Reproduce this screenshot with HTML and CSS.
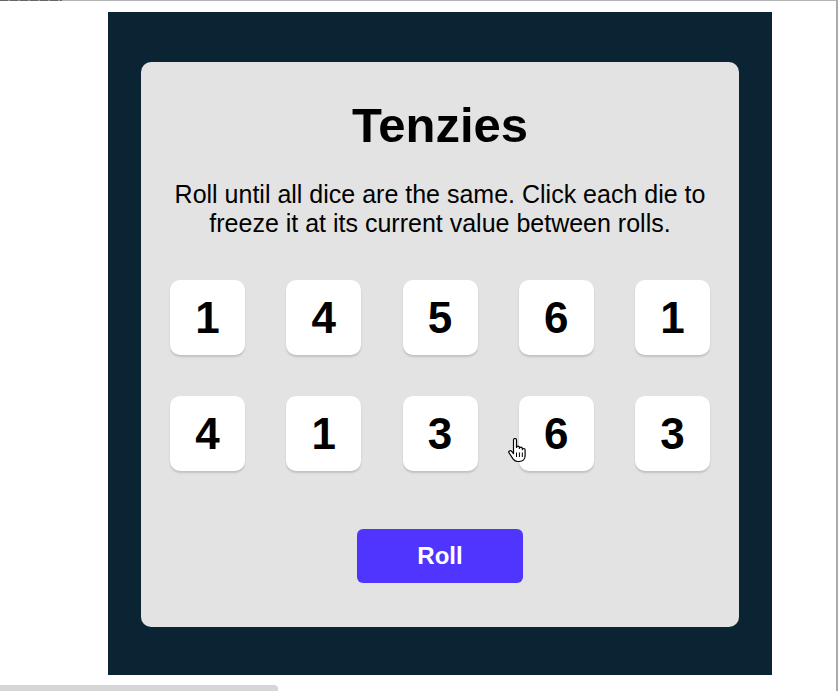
FILE: index.html
```html
<!DOCTYPE html>
<html lang="en">
<head>
  <meta charset="UTF-8" />
  <meta name="viewport" content="width=device-width, initial-scale=1.0" />
  <title>Tenzies</title>
  <link rel="stylesheet" href="styles.css">
</head>
<body>
  <div class="frame">
    <div class="frame-dash"></div>
    <main class="board">
      <div class="card">
        <h1 class="title">Tenzies</h1>
        <p class="instructions">Roll until all dice are the same. Click each die to freeze it at its current value between rolls.</p>
        <div class="dice">
          <button class="die">1</button>
          <button class="die">4</button>
          <button class="die">5</button>
          <button class="die">6</button>
          <button class="die">1</button>
          <button class="die">4</button>
          <button class="die">1</button>
          <button class="die">3</button>
          <button class="die">6</button>
          <button class="die">3</button>
        </div>
        <button class="roll">Roll</button>
      </div>
    </main>
    <svg class="cursor" width="20" height="26" viewBox="0 0 20 26">
      <path d="M5.5 2.2c0-1 .7-1.7 1.5-1.7s1.5.7 1.5 1.7v7.3c.2-.9.8-1.4 1.5-1.4.8 0 1.4.6 1.4 1.5v.8c.2-.8.8-1.3 1.5-1.3.8 0 1.4.6 1.4 1.5v1c.2-.7.8-1.1 1.4-1.1.8 0 1.4.6 1.4 1.5v5.5c0 3.6-2.4 6-5.8 6H9.6c-1.9 0-3.3-.9-4.4-2.4L1.1 15c-.5-.7-.4-1.6.3-2.1.7-.5 1.6-.3 2.1.3l2 2.4z" fill="#fff" stroke="#000" stroke-width="1.2" stroke-linejoin="round"/>
      <path d="M8.5 14.5v4.5M11.4 14.5v4.5M14.3 14.5v4.5" stroke="#000" stroke-width="1"/>
    </svg>
    <div class="scrollbar"></div>
  </div>
</body>
</html>
```

FILE: styles.css
```css
:root {
  --navy: #0b2434;
  --card-bg: #e3e3e3;
  --die-bg: #ffffff;
  --roll-bg: #5035ff;
}
html, body {
  margin: 0;
  padding: 0;
  height: 100%;
}
body {
  font-family: "Liberation Sans", Arial, sans-serif;
  background: #fff;
  overflow: hidden;
}
.frame {
  position: relative;
  box-sizing: border-box;
  width: 838px;
  height: 691px;
  padding: 11px 0 0 108px;
  border-top: 1px solid #b4b4b4;
  border-right: 2px solid #ababab;
}
.frame-dash {
  position: absolute;
  top: -1px;
  left: 0;
  width: 62px;
  height: 1px;
  background: repeating-linear-gradient(to right, #666 0 8px, #999 8px 10px);
}
.board {
  width: 664px;
  height: 663px;
  background: var(--navy);
  padding: 50px 33px 0;
  box-sizing: border-box;
}
.card {
  background: var(--card-bg);
  border-radius: 10px;
  height: 565px;
  padding: 35px 0 0;
  box-sizing: border-box;
  display: flex;
  flex-direction: column;
  align-items: center;
}
.title {
  margin: 0;
  font-size: 49px;
  line-height: 56px;
  font-weight: 700;
  color: #000;
}
.instructions {
  margin: 27px 0 42px;
  font-size: 25px;
  line-height: 29px;
  text-align: center;
  padding: 0 30px;
  color: #000;
}
.dice {
  display: grid;
  grid-template-columns: repeat(5, 75px);
  gap: 41px 41.3px;
}
.die {
  width: 75px;
  height: 75px;
  border: none;
  border-radius: 10px;
  background: var(--die-bg);
  box-shadow: 0 2px 2px rgba(0, 0, 0, 0.15);
  font-family: inherit;
  font-size: 44px;
  font-weight: 700;
  color: #000;
  padding: 0;
  cursor: pointer;
}
.roll {
  margin-top: 58px;
  width: 166px;
  height: 54px;
  border: none;
  border-radius: 6px;
  background: var(--roll-bg);
  color: #fff;
  font-family: inherit;
  font-size: 24px;
  font-weight: 700;
  cursor: pointer;
}
.cursor {
  position: absolute;
  left: 508px;
  top: 437px;
}
.scrollbar {
  position: absolute;
  left: 0;
  bottom: 0;
  width: 278px;
  height: 6px;
  background: #d6d6d6;
  border-radius: 0 4px 0 0;
}
```
